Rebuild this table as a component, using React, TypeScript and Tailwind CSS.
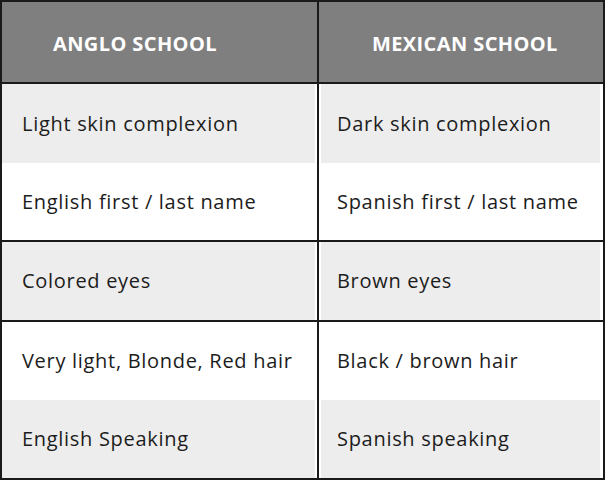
import React from "react";

type Row = { anglo: string; mexican: string; shaded: boolean; lineBelow: boolean; h: string };

const rows: Row[] = [
    { anglo: "Light skin complexion", mexican: "Dark skin complexion", shaded: true, lineBelow: false, h: "h-[79px]" },
    { anglo: "English first / last name", mexican: "Spanish first / last name", shaded: false, lineBelow: true, h: "h-[77px]" },
    { anglo: "Colored eyes", mexican: "Brown eyes", shaded: true, lineBelow: true, h: "h-[78px]" },
    { anglo: "Very light, Blonde, Red hair", mexican: "Black / brown hair", shaded: false, lineBelow: false, h: "h-[78px]" },
    { anglo: "English Speaking", mexican: "Spanish speaking", shaded: true, lineBelow: false, h: "h-[78px]" },
];

const Cell = ({ text, shaded, left }: { text: string; shaded: boolean; left: boolean }) => (
    <div className={"h-full bg-white " + (left ? "pr-[2px]" : "pl-[2px] pr-[3px]")}>
        <div
            className={
                "h-full flex items-center whitespace-nowrap " +
                (left ? "pl-5 " : "pl-[16px] ") +
                (shaded ? "bg-[#ededed]" : "bg-white")
            }
        >
            {text}
        </div>
    </div>
);

export default function App() {
    return (
        <div className="w-[605px] h-[480px] bg-white font-['Open_Sans','Lato',sans-serif] text-[20px] tracking-[0.7px] text-[#1c1c1c]">
            <div className="h-full flex flex-col border-2 border-[#1a1a1a]">
                <div className="grid grid-cols-[315px_2px_284px] h-[80px] bg-[#7f7f7f] text-white font-bold text-[20px] tracking-[0.4px]">
                    <div className="flex items-center pl-[51px] pt-[4px]">ANGLO SCHOOL</div>
                    <div className="bg-[#1a1a1a]" />
                    <div className="flex items-center pl-[53px] pt-[4px]">MEXICAN SCHOOL</div>
                </div>
                <div className="h-[2px] bg-[#1a1a1a]" />
                {rows.map((r, i) => (
                    <div key={i}>
                        <div className={"grid grid-cols-[315px_2px_284px] " + r.h}>
                            <Cell text={r.anglo} shaded={r.shaded} left />
                            <div className="bg-[#1a1a1a]" />
                            <Cell text={r.mexican} shaded={r.shaded} left={false} />
                        </div>
                        {r.lineBelow && <div className="h-[2px] bg-[#1a1a1a]" />}
                    </div>
                ))}
            </div>
        </div>
    );
}
